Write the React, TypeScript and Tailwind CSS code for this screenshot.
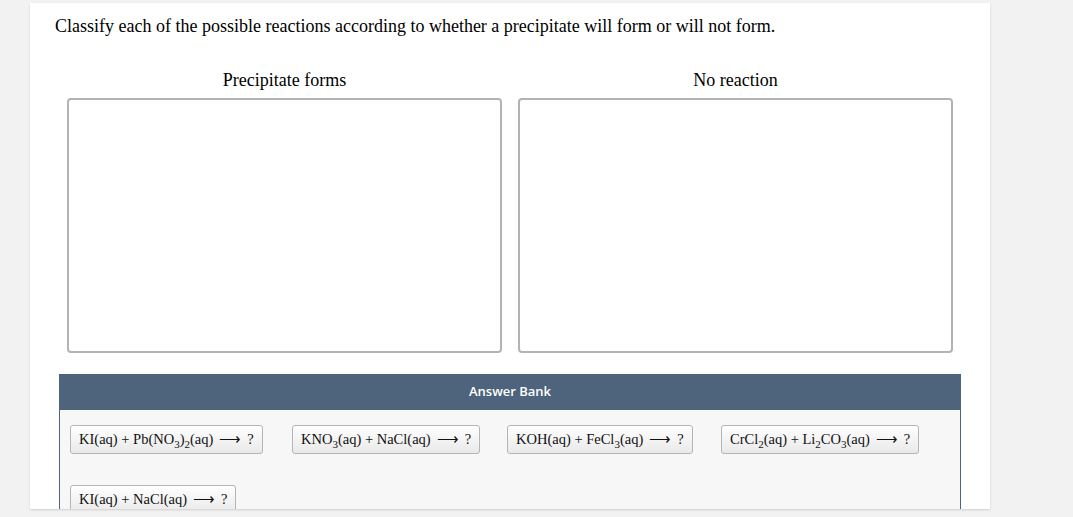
import React from "react";

const serif = { fontFamily: '"Liberation Serif", "Times New Roman", serif' };

const Sub = ({ children }: { children: React.ReactNode }) => (
  <sub className="text-[11px] relative top-[4px]">{children}</sub>
);

const Chip = ({ children, w }: { children: React.ReactNode; w?: string }) => (
  <div className={w ?? ""}>
    <div
      className="inline-flex items-center h-[29px] px-[8px] rounded-[3px] border border-[#b5b5b5] bg-gradient-to-b from-white to-[#e9e9e9] text-[14.5px] text-[#111] whitespace-nowrap"
      style={serif}
    >
      {children}
    </div>
  </div>
);

const Arrow = () => <span className="mx-[6px]">⟶</span>;

export default function App() {
  return (
    <div className="min-h-[517px] bg-[#f2f2f2] pt-[3px] pl-[30px]">
      <div className="w-[960px] h-[506px] bg-white overflow-hidden shadow-[0_1px_2px_rgba(0,0,0,0.15)] pt-[13px]">
        <p className="pl-[25px] text-[18px] leading-[20px] text-black" style={serif}>
          Classify each of the possible reactions according to whether a precipitate will form or will not form.
        </p>

        {/* bins */}
        <div className="flex gap-[16px] pl-[37px] mt-[34px]">
          {["Precipitate forms", "No reaction"].map((t) => (
            <div key={t} className="w-[435px] flex flex-col">
              <div className="text-center text-[18px] leading-[20px] mb-[8px] text-black" style={serif}>
                {t}
              </div>
              <div className="h-[255px] border-2 border-[#b3b3b3] rounded-[4px]" />
            </div>
          ))}
        </div>

        {/* answer bank */}
        <div className="ml-[29px] mt-[21px] w-[902px]">
          <div
            className="h-[36px] bg-[#4e637c] flex items-center justify-center text-white text-[13px] font-semibold"
            style={{ fontFamily: '"Open Sans", "Noto Sans", sans-serif' }}
          >
            Answer Bank
          </div>
          <div className="bg-[#f7f7f7] border-x border-[#4e637c] h-[200px] pt-[15px] pl-[10px]">
            <div className="flex flex-wrap gap-y-[31px]">
              <Chip w="w-[222px]">
                KI(aq) + Pb(NO<Sub>3</Sub>)<Sub>2</Sub>(aq)
                <Arrow />?
              </Chip>
              <Chip w="w-[215px]">
                KNO<Sub>3</Sub>(aq) + NaCl(aq)
                <Arrow />?
              </Chip>
              <Chip w="w-[214px]">
                KOH(aq) + FeCl<Sub>3</Sub>(aq)
                <Arrow />?
              </Chip>
              <Chip w="w-[230px]">
                CrCl<Sub>2</Sub>(aq) + Li<Sub>2</Sub>CO<Sub>3</Sub>(aq)
                <Arrow />?
              </Chip>
              <Chip>
                KI(aq) + NaCl(aq)
                <Arrow />?
              </Chip>
            </div>
          </div>
        </div>
      </div>
    </div>
  );
}
